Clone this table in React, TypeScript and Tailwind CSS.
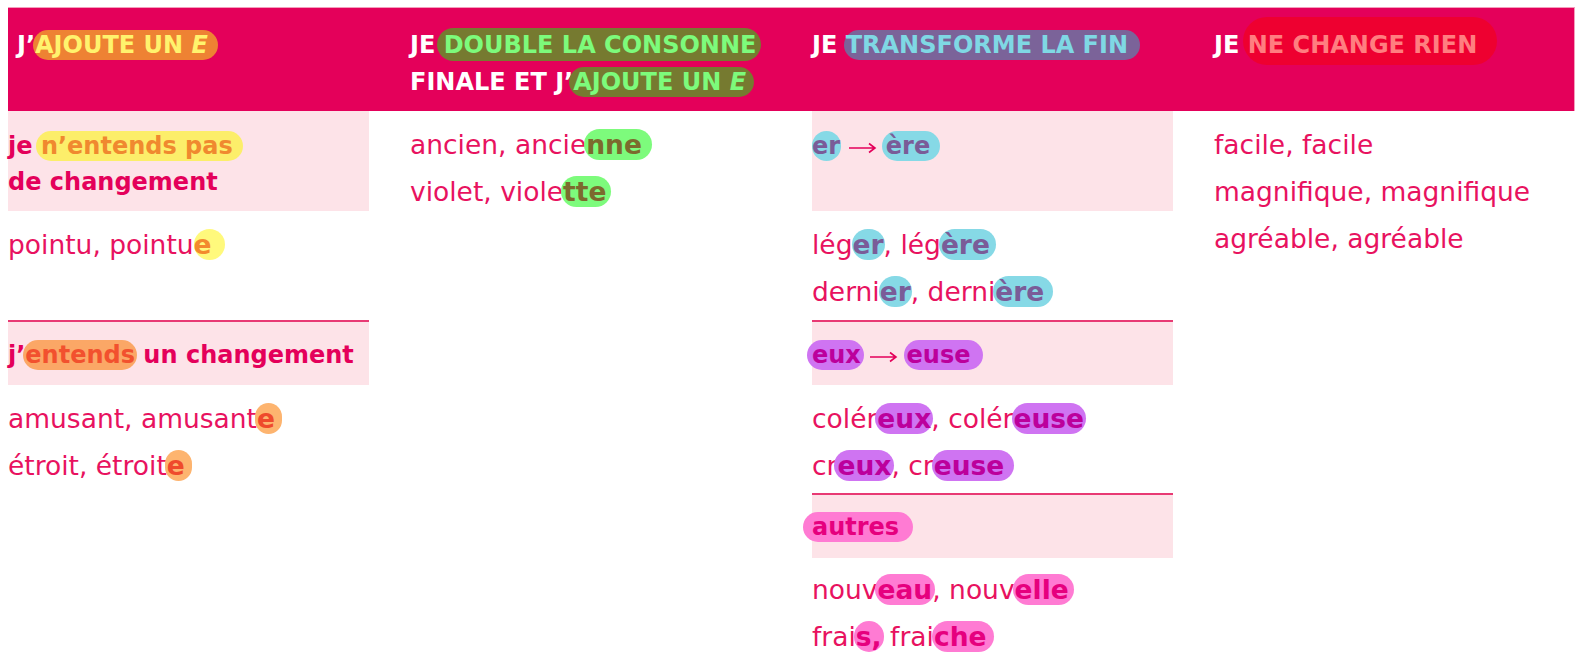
import type { ReactNode } from "react";

const Mark = ({ c, children }: { c: string; children: ReactNode }) => {
	return <span className={`rounded-full ${c}`}>{children}</span>;
};

const Arrow = () => {
	return (
		<svg width="29" height="12" viewBox="0 0 29 12" className="inline-block align-baseline">
			<path d="M1 6 H27 M21 1.5 L27 6 L21 10.5" fill="none" stroke="#E4005A" strokeWidth="1.6" />
		</svg>
	);
};

// colours for the marker strokes
const yellowHead = "bg-[#FCEE6A] text-[#F0892F]";
const yellowE = "bg-[#FFF97C] text-[#F38A2E] font-bold";
const orangeHead = "bg-[#FBA766] text-[#F2512E]";
const orangeE = "bg-[#FDB46F] text-[#EF4A2C] font-bold";
const green = "bg-[#7DFB7C] text-[#7C6A2E] font-bold";
const cyan = "bg-[#86D9E6] text-[#7A5C98] font-bold";
const purple = "bg-[#CF74F2] text-[#BC009C] font-bold";
const pink = "bg-[#FF7BD3] text-[#E6007E] font-bold";

const subHead = "bg-[#FDE3E8] font-bold text-[24px] leading-[36px] text-[#E4005A]";
const body = "text-[26.5px] leading-[47px] text-[#E8125F]";
const rule = "h-[2px] bg-[#E83A74]";

const App = () => {
	return (
		<div className="min-h-screen bg-white font-['DejaVu_Sans',sans-serif]">
			<div className="ml-[8px] pt-[7px] w-[1567px]">
				<div className="grid grid-cols-[361px_361px_361px_361px] gap-x-[41px] h-[104px] bg-[#E4005A] border-t border-r border-[#F49DBC] pt-[19px] text-white font-bold text-[24px] leading-[37px] uppercase">
					<div className="pl-[9px] whitespace-nowrap">
						J’<Mark c="bg-[#EE8233] text-[#FFF36D] pl-[2px] -ml-[2px] pr-[10px] -mr-[10px] py-[1px]">
							AJOUTE UN <em>E</em>
						</Mark>
					</div>
					<div className="whitespace-nowrap">
						JE{" "}
						<Mark c="bg-[#767A30] text-[#7DFB7B] pl-[7px] -ml-[7px] pr-[5px] -mr-[5px] pt-[3px] pb-[2px]">
							DOUBLE LA CONSONNE
						</Mark>
						<br />
						FINALE ET J’
						<Mark c="bg-[#767A30] text-[#7DFB7B] pl-[4px] -ml-[4px] pr-[8px] -mr-[8px] py-[1px]">
							AJOUTE UN <em>E</em>
						</Mark>
					</div>
					<div className="whitespace-nowrap">
						JE{" "}
						<Mark c="bg-[#7B6399] text-[#7FD8E4] pl-[2px] -ml-[2px] pr-[12px] -mr-[12px] py-[1px]">
							TRANSFORME LA FIN
						</Mark>
					</div>
					<div className="whitespace-nowrap">
						JE{" "}
						<Mark c="bg-[#EE0030] text-[#FF7E80] pl-[5px] -ml-[5px] pr-[20px] -mr-[20px] pt-[14px] pb-[6px] rounded-[26px]">
							NE CHANGE RIEN
						</Mark>
					</div>
				</div>

				<div className="grid grid-cols-[361px_361px_361px_361px] gap-x-[41px]">
					{/* column 1 */}
					<div className="flex flex-col">
						<div className={`h-[100px] pt-[17px] ${subHead}`}>
							je{" "}
							<Mark c={`${yellowHead} pl-[5px] -ml-[5px] pr-[10px] -mr-[10px] py-[1px]`}>n’entends pas</Mark>
							<br />
							de changement
						</div>
						<div className={`h-[109px] pt-[10px] ${body}`}>
							pointu, pointu<Mark c={`${yellowE} pr-[13px] -mr-[13px]`}>e</Mark>
						</div>
						<div className={rule} />
						<div className={`h-[63px] pt-[15px] ${subHead}`}>
							j’<Mark c={`${orangeHead} pl-[2px] -ml-[2px] pr-[2px] -mr-[2px] py-[1px]`}>entends</Mark> un changement
						</div>
						<div className={`pt-[10px] ${body}`}>
							amusant, amusant<Mark c={`${orangeE} pl-[2px] -ml-[2px] pr-[7px] -mr-[7px]`}>e</Mark>
							<br />
							étroit, étroit<Mark c={`${orangeE} pl-[2px] -ml-[2px] pr-[7px] -mr-[7px]`}>e</Mark>
						</div>
					</div>

					{/* column 2 */}
					<div className={`pt-[10px] ${body}`}>
						ancien, ancie<Mark c={`${green} pl-[2px] -ml-[2px] pr-[10px] -mr-[10px]`}>nne</Mark>
						<br />
						violet, viole<Mark c={`${green} pl-[2px] -ml-[2px] pr-[5px] -mr-[5px]`}>tte</Mark>
					</div>

					{/* column 3 */}
					<div className="flex flex-col">
						<div className={`h-[100px] pt-[17px] ${subHead}`}>
							<Mark c={`${cyan} pr-[1px] -mr-[1px] py-[1px]`}>er</Mark> <Arrow />{" "}
							<Mark c={`${cyan} pl-[4px] -ml-[4px] pr-[10px] -mr-[10px] py-[1px]`}>ère</Mark>
						</div>
						<div className={`h-[109px] pt-[10px] ${body}`}>
							lég<Mark c={`${cyan} px-[1px] -mx-[1px]`}>er</Mark>, lég
							<Mark c={`${cyan} pl-[2px] -ml-[2px] pr-[6px] -mr-[6px]`}>ère</Mark>
							<br />
							derni<Mark c={`${cyan} px-[1px] -mx-[1px]`}>er</Mark>, derni
							<Mark c={`${cyan} pl-[2px] -ml-[2px] pr-[9px] -mr-[9px]`}>ère</Mark>
						</div>
						<div className={rule} />
						<div className={`h-[63px] pt-[15px] ${subHead}`}>
							<Mark c={`${purple} pl-[5px] -ml-[5px] pr-[3px] -mr-[3px] py-[1px]`}>eux</Mark> <Arrow />{" "}
							<Mark c={`${purple} pl-[3px] -ml-[3px] pr-[12px] -mr-[12px] py-[1px]`}>euse</Mark>
						</div>
						<div className={`h-[108px] pt-[10px] ${body}`}>
							colér<Mark c={`${purple} px-[2px] -mx-[2px]`}>eux</Mark>, colér
							<Mark c={`${purple} px-[2px] -mx-[2px]`}>euse</Mark>
							<br />
							cr<Mark c={`${purple} px-[3px] -mx-[3px]`}>eux</Mark>, cr
							<Mark c={`${purple} pl-[2px] -ml-[2px] pr-[10px] -mr-[10px]`}>euse</Mark>
						</div>
						<div className={rule} />
						<div className={`h-[63px] pt-[14px] ${subHead}`}>
							<Mark c={`${pink} pl-[9px] -ml-[9px] pr-[14px] -mr-[14px] py-[1px]`}>autres</Mark>
						</div>
						<div className={`pt-[8px] ${body}`}>
							nouv<Mark c={`${pink} px-[3px] -mx-[3px]`}>eau</Mark>, nouv
							<Mark c={`${pink} pl-[2px] -ml-[2px] pr-[5px] -mr-[5px]`}>elle</Mark>
							<br />
							frai<Mark c={`${pink} px-[2px] -mx-[2px]`}>s,</Mark> frai
							<Mark c={`${pink} pl-[2px] -ml-[2px] pr-[8px] -mr-[8px]`}>che</Mark>
						</div>
					</div>

					{/* column 4 */}
					<div className={`pt-[10px] ${body}`}>
						facile, facile
						<br />
						magnifique, magnifique
						<br />
						agréable, agréable
					</div>
				</div>
			</div>
		</div>
	);
};

export default App;
